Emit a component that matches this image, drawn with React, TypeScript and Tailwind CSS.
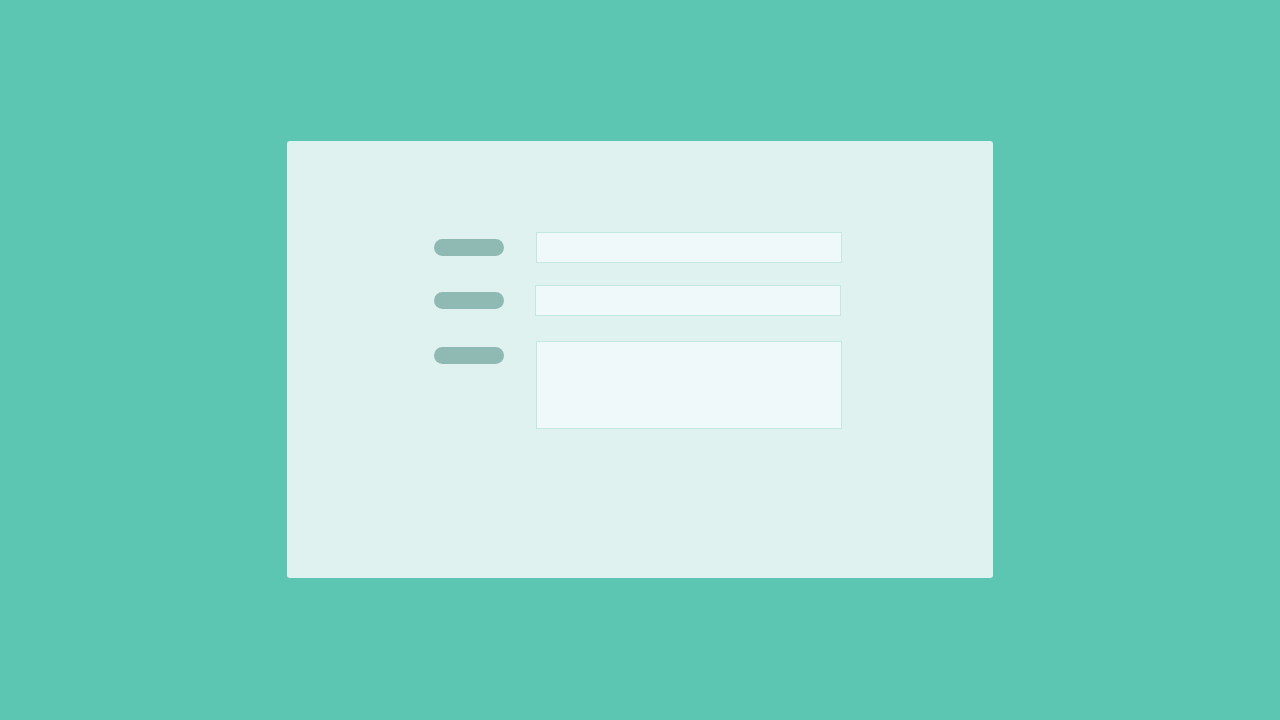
import React from "react";

export default function App() {
  return (
    <div className="flex h-screen w-full items-center justify-center bg-[#5cc6b3]" style={{ fontFamily: '"Liberation Sans", sans-serif' }}>
      <div className="mb-[2px] flex h-[437px] w-[706px] flex-col rounded-[3px] bg-[#dff2ef] pl-[147px] pt-[91px]">
        <div className="flex items-center">
          <div className="h-[17px] w-[70px] rounded-full bg-[#8fbab3]" />
          <div className="ml-[32px] h-[31px] w-[306px] border border-[#c3e8e2] bg-[#f0f9f9]" />
        </div>
        <div className="mt-[22px] flex items-center">
          <div className="h-[17px] w-[70px] rounded-full bg-[#8fbab3]" />
          <div className="ml-[31px] h-[31px] w-[306px] border border-[#c3e8e2] bg-[#f0f9f9]" />
        </div>
        <div className="mt-[25px] flex items-start">
          <div className="mt-[6px] h-[17px] w-[70px] rounded-full bg-[#8fbab3]" />
          <div className="ml-[32px] h-[88px] w-[306px] border border-[#c3e8e2] bg-[#f0f9f9]" />
        </div>
      </div>
    </div>
  );
}
